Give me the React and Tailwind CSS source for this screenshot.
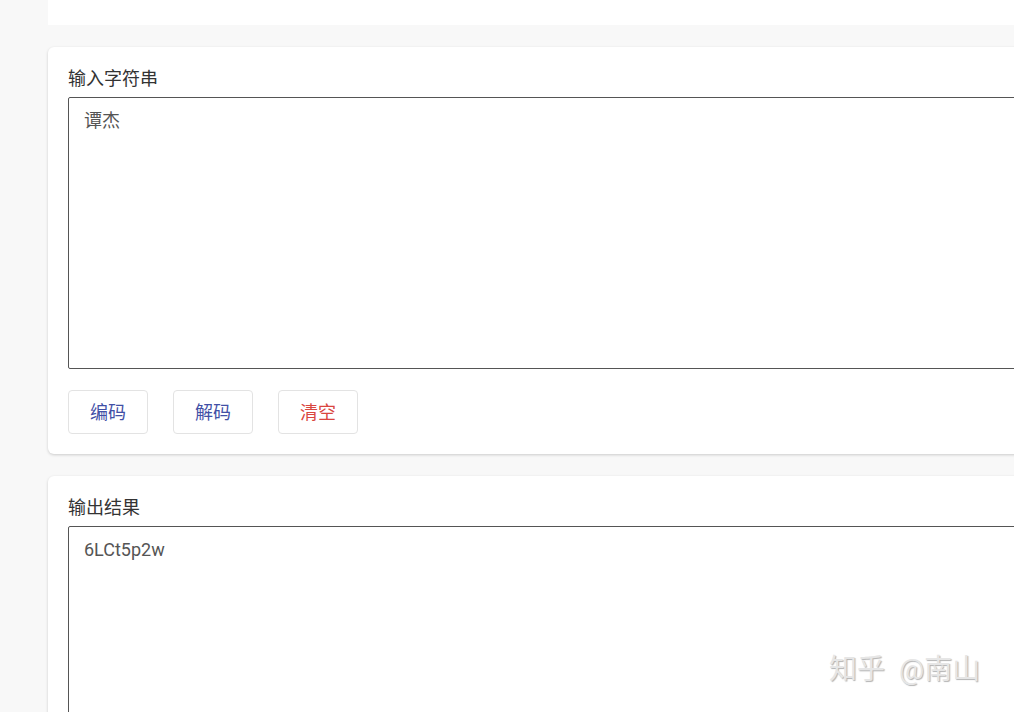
import React from 'react'

const FONT = { fontFamily: 'Roboto, "Noto Sans CJK SC", sans-serif' }

function ActionButton({ label, tone }) {
  return (
    <button
      className={`w-[80px] h-[44px] rounded-[4px] border border-[#e3e3e3] bg-white text-[18px] ${tone === 'danger' ? 'text-[#d9463f]' : 'text-[#4250a6]'}`}
    >
      {label}
    </button>
  )
}

function Field({ label, value, height }) {
  return (
    <div className="flex flex-col">
      <p className="text-[18px] leading-[24px] text-[#333] mb-[6px]">{label}</p>
      <div className={`border border-[#555] rounded-[2px] px-[15px] pt-[11px] text-[18px] leading-[24px] text-[#555] ${height}`}>
        {value}
      </div>
    </div>
  )
}

export default function App() {
  return (
    <div className="relative w-[1014px] h-[712px] overflow-hidden bg-[#f8f8f8]" style={FONT}>
      <div className="pl-[48px] flex flex-col gap-[22px]">
        {/* card above, cut off */}
        <div className="w-[1200px] h-[25px] bg-white" />

        {/* input card */}
        <div className="w-[1200px] bg-white rounded-[6px] shadow-[0_1px_3px_rgba(0,0,0,0.18)] px-[20px] pt-[20px] pb-[20px]">
          <Field label="输入字符串" value="谭杰" height="h-[272px]" />
          <div className="flex gap-[25px] mt-[21px]">
            <ActionButton label="编码" />
            <ActionButton label="解码" />
            <ActionButton label="清空" tone="danger" />
          </div>
        </div>

        {/* output card */}
        <div className="w-[1200px] bg-white rounded-[6px] shadow-[0_1px_3px_rgba(0,0,0,0.18)] px-[20px] pt-[20px] pb-[20px]">
          <Field label="输出结果" value="6LCt5p2w" height="h-[272px]" />
        </div>
      </div>

      {/* watermark */}
      <div
        className="absolute left-[829px] top-[651px] flex gap-[14px] text-[28px] leading-[38px] text-[#e6e6e6] [text-shadow:1px_1px_1px_rgba(0,0,0,0.3)]"
      >
        <span>知乎</span>
        <span>@南山</span>
      </div>
    </div>
  )
}
